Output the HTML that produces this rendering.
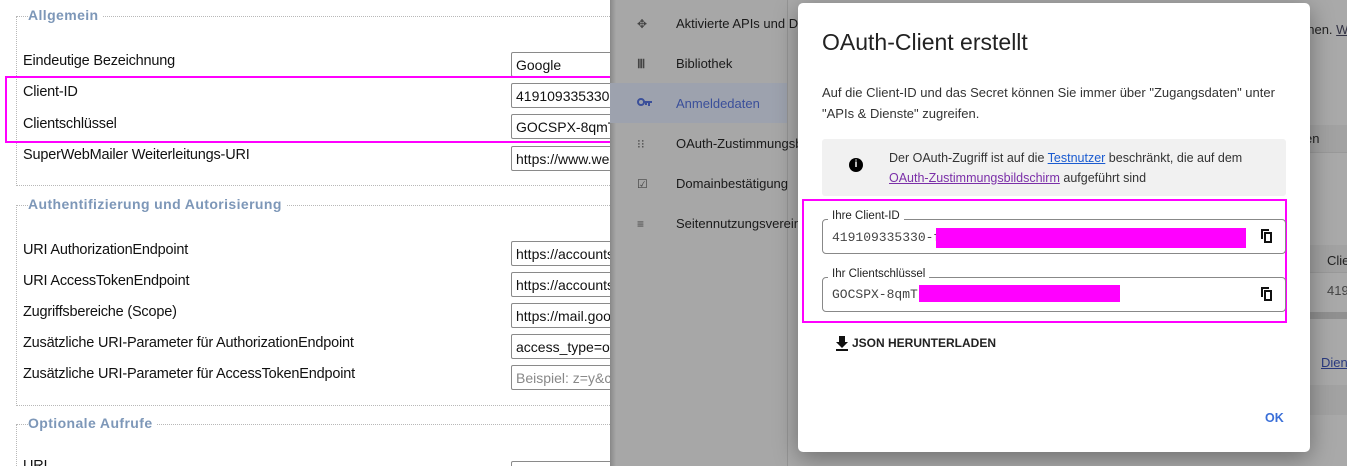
<!DOCTYPE html>
<html style="width:1347px;height:466px;overflow:hidden"><head><meta charset="utf-8"><style>
*{margin:0;padding:0;box-sizing:border-box}
body{width:1347px;height:466px;overflow:hidden;position:relative;background:#fff;font-family:"Liberation Sans",sans-serif;color:#111}
.a{position:absolute;white-space:nowrap}
.fs{position:absolute;left:16px;width:600px;border:1px dotted #b8b8b8}
.lg{position:absolute;left:28px;background:#fff;padding:0 4px 0 0;color:#7d97b8;font-weight:bold;font-size:14px;letter-spacing:.4px}
.lb{position:absolute;left:23px;font-size:14.5px;letter-spacing:-.2px;color:#111;white-space:nowrap}
.in{position:absolute;left:511px;width:110px;height:25px;border:1px solid #8a8a8a;border-radius:2px;font-size:14px;padding:4px 0 0 4px;white-space:nowrap;overflow:hidden;color:#111}
.sb{position:absolute;left:610px;top:0;width:178px;height:466px;background:#a7a7a7}
.si{position:absolute;left:676px;font-size:13px;color:#1a1a1a;white-space:nowrap}
.ic{position:absolute;left:637px;width:14px;height:12px;color:#444;font-size:12px}
.dlg{position:absolute;left:798px;top:3px;width:512px;height:449px;background:#fff;border-radius:5px;box-shadow:0 6px 24px rgba(0,0,0,.35)}
.t{font-size:13px;color:#333}
.fld{position:absolute;left:822px;width:464px;border:1px solid #888;border-radius:4px}
.fl{position:absolute;background:#fff;font-size:11.5px;padding:0 4px;color:#222}
.mono{font-family:"Liberation Mono",monospace;font-size:13px;color:#444}
</style></head><body>
<div class="fs" style="top:16px;height:170px"></div>
<div class="lg" style="top:7px">Allgemein</div>
<div class="fs" style="top:205px;height:201px"></div>
<div class="lg" style="top:196px">Authentifizierung und Autorisierung</div>
<div class="fs" style="top:424px;height:60px"></div>
<div class="lg" style="top:415px">Optionale Aufrufe</div>

<div class="lb" style="top:53px">Eindeutige Bezeichnung</div>
<div class="lb" style="top:84px">Client-ID</div>
<div class="lb" style="top:116px">Clientschlüssel</div>
<div class="lb" style="top:147px">SuperWebMailer Weiterleitungs-URI</div>
<div class="in" style="top:52px">Google</div>
<div class="in" style="top:83px">419109335330</div>
<div class="in" style="top:114px">GOCSPX-8qmT</div>
<div class="in" style="top:146px">https://www.web</div>
<div class="a" style="left:5px;top:76px;width:607px;height:67px;border:2px solid #f0f"></div>

<div class="lb" style="top:242px">URI AuthorizationEndpoint</div>
<div class="lb" style="top:273px">URI AccessTokenEndpoint</div>
<div class="lb" style="top:304px">Zugriffsbereiche (Scope)</div>
<div class="lb" style="top:335px">Zusätzliche URI-Parameter für AuthorizationEndpoint</div>
<div class="lb" style="top:366px">Zusätzliche URI-Parameter für AccessTokenEndpoint</div>
<div class="in" style="top:241px">https://accounts</div>
<div class="in" style="top:272px">https://accounts</div>
<div class="in" style="top:303px">https://mail.goo</div>
<div class="in" style="top:334px">access_type=off</div>
<div class="in" style="top:365px;color:#888">Beispiel: z=y&amp;c</div>
<div class="lb" style="top:458px">URI ...</div>
<div class="in" style="top:461px"></div>

<div class="sb"></div>
<div class="a" style="left:610px;top:0;width:6px;height:466px;background:linear-gradient(90deg,#888,#a7a7a7)"></div>
<div class="a" style="left:610px;top:83px;width:178px;height:40px;background:#9da2ae"></div>
<div class="a" style="left:787px;top:0;width:1px;height:466px;background:#959595"></div>
<div class="a" style="left:788px;top:0;width:559px;height:466px;background:#a9a9a9"></div>
<div class="a" style="left:1300px;top:125px;width:47px;height:28px;background:#a2a2a2;border-bottom:1px solid #999"></div>
<div class="a" style="left:1300px;top:245px;width:47px;height:28px;background:#a2a2a2;border-bottom:1px solid #999"></div>
<div class="a" style="left:1300px;top:312px;width:47px;height:7px;background:#909090"></div>
<div class="a" style="left:1300px;top:385px;width:47px;height:30px;background:#a2a2a2"></div>
<div class="a" style="left:1300px;top:22px;font-size:13px;color:#222">nnen. <span style="color:#334;text-decoration:underline">W</span></div>
<div class="a" style="left:1305px;top:131px;font-size:13px;color:#222">en</div>
<div class="a" style="left:1327px;top:253px;font-size:13px;color:#222">Clie</div>
<div class="a" style="left:1327px;top:283px;font-size:13px;color:#444">419</div>
<div class="a" style="left:1321px;top:355px;font-size:13px;color:#2a3a80;text-decoration:underline">Dien</div>

<div class="si" style="top:16px">Aktivierte APIs und D</div>
<div class="si" style="top:56px">Bibliothek</div>
<div class="si" style="top:96px;color:#3a4f9a">Anmeldedaten</div>
<div class="si" style="top:136px">OAuth-Zustimmungsb</div>
<div class="si" style="top:176px">Domainbestätigung</div>
<div class="si" style="top:216px">Seitennutzungsverein</div>
<div class="ic" style="top:17px">✥</div>
<div class="ic" style="top:57px;font-weight:bold">Ⅲ</div>
<svg class="a" style="left:637px;top:97px" width="16" height="10" viewBox="0 0 16 10"><circle cx="4" cy="5" r="3" fill="none" stroke="#3a4f9a" stroke-width="2"/><path d="M7 4h8v2h-2v3h-2V6h-1v2H8V6H7z" fill="#3a4f9a"/></svg>
<div class="ic" style="top:137px">⁝⁝</div>
<div class="ic" style="top:177px">☑</div>
<div class="ic" style="top:217px">≡</div>

<div class="dlg"></div>
<div class="a" style="left:822px;top:29px;font-size:23px;color:#222">OAuth-Client erstellt</div>
<div class="a t" style="left:822px;top:82px;line-height:21px">Auf die Client-ID und das Secret können Sie immer über "Zugangsdaten" unter<br>"APIs &amp; Dienste" zugreifen.</div>
<div class="a" style="left:822px;top:139px;width:464px;height:57px;background:#f1f1f1;border-radius:3px"></div>
<div class="a" style="left:849px;top:158px;width:14px;height:14px;border-radius:50%;background:#000;color:#fff;font-size:10px;font-weight:bold;text-align:center;line-height:14px">i</div>
<div class="a t" style="left:889px;top:148px;line-height:20px;font-size:12.5px">Der OAuth-Zugriff ist auf die <span style="color:#1a5bd0;text-decoration:underline">Testnutzer</span> beschränkt, die auf dem<br><span style="color:#7b2fa8;text-decoration:underline">OAuth-Zustimmungsbildschirm</span> aufgeführt sind</div>
<div class="a" style="left:802px;top:199px;width:485px;height:124px;border:2px solid #f0f"></div>
<div class="fld" style="top:219px;height:35px"></div>
<div class="fl" style="left:828px;top:210px">Ihre Client-ID</div>
<div class="a mono" style="left:832px;top:230px">419109335330-f</div>
<div class="a" style="left:936px;top:228px;width:310px;height:20px;background:#f0f"></div>
<div class="fld" style="top:277px;height:35px"></div>
<div class="fl" style="left:828px;top:268px">Ihr Clientschlüssel</div>
<div class="a mono" style="left:832px;top:287px">GOCSPX-8qmT</div>
<div class="a" style="left:919px;top:285px;width:201px;height:17px;background:#f0f"></div>
<div class="a" style="left:1261px;top:229px;width:8px;height:10px;border:2px solid #111;border-right:none;border-bottom:none"></div>
<div class="a" style="left:1264px;top:232px;width:8px;height:11px;border:2px solid #111"></div>
<div class="a" style="left:1261px;top:287px;width:8px;height:10px;border:2px solid #111;border-right:none;border-bottom:none"></div>
<div class="a" style="left:1264px;top:290px;width:8px;height:11px;border:2px solid #111"></div>
<svg class="a" style="left:835px;top:336px" width="14" height="15" viewBox="0 0 14 15"><path d="M4 0h6v6h3l-6 6-6-6h3z" fill="#111"/><rect x="1" y="13" width="12" height="2" fill="#111"/></svg>
<div class="a" style="left:852px;top:336px;font-size:12px;font-weight:bold;color:#222">JSON HERUNTERLADEN</div>
<div class="a" style="left:1265px;top:411px;font-size:12.5px;font-weight:bold;color:#3a6fd8">OK</div>
</body></html>
